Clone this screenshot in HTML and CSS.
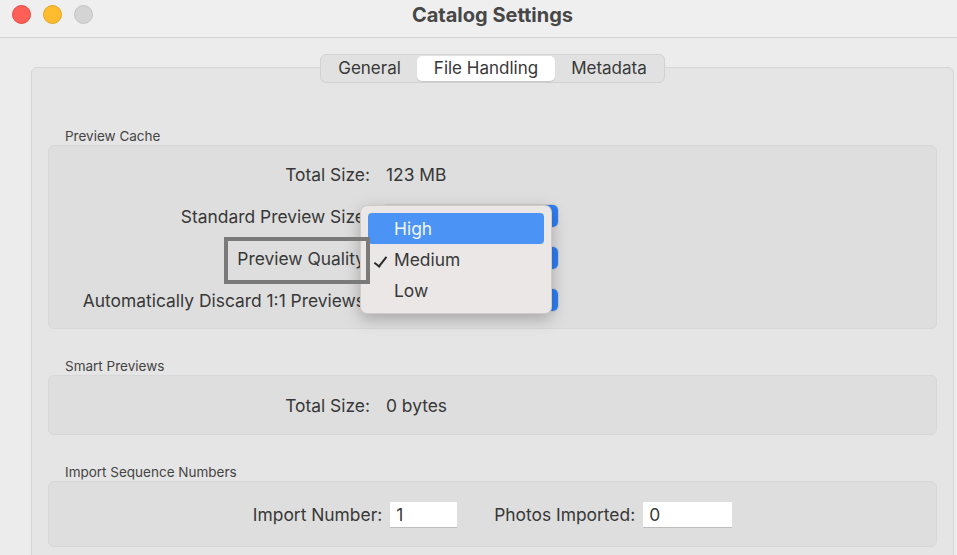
FILE: index.html
```html
<!DOCTYPE html>
<html lang="en">
<head>
<meta charset="utf-8"/>
<title>Catalog Settings</title>
<link rel="stylesheet" href="styles.css">
</head>
<body>
<div class="window">
    <header class="titlebar">
        <div class="lights">
            <span class="light red"></span>
            <span class="light yellow"></span>
            <span class="light gray"></span>
        </div>
        <h1 class="title">Catalog Settings</h1>
        <div></div>
    </header><!-- titlebar -->

    <main class="tabview">
        <nav class="tabs">
            <span class="tab">General</span>
            <span class="tab on">File Handling</span>
            <span class="tab">Metadata</span>
        </nav>

        <section class="group">
            <div class="group_label">Preview Cache</div>
            <div class="box box_cache">
                <div class="row"><span class="lbl">Total Size:</span><span class="val">123 MB</span></div>
                <div class="row"><span class="lbl">Standard Preview Size:</span><span class="popup"></span></div>
                <div class="row"><span class="lbl">Preview Quality:</span><span class="popup"></span></div>
                <div class="row"><span class="lbl">Automatically Discard 1:1 Previews:</span><span class="popup"></span></div>

                <ul class="menu">
                    <li class="sel">High</li>
                    <li class="checked">Medium</li>
                    <li>Low</li>
                </ul>
                <div class="callout"></div>
            </div>
        </section><!-- group -->

        <section class="group">
            <div class="group_label">Smart Previews</div>
            <div class="box box_smart">
                <div class="row"><span class="lbl">Total Size:</span><span class="val">0 bytes</span></div>
            </div>
        </section><!-- group -->

        <section class="group">
            <div class="group_label">Import Sequence Numbers</div>
            <div class="box box_import">
                <label class="field">Import Number: <span class="input w_num">1</span></label>
                <label class="field">Photos Imported: <span class="input w_photo">0</span></label>
            </div>
        </section><!-- group -->
    </main><!-- tabview -->
</div>
</body>
</html>
```

FILE: styles.css
```css
*{margin:0;padding:0;box-sizing:border-box;}
li{list-style:none;}

html,body{height:100%;overflow:hidden;}
body{
    background:#ececec;
    font-family:Inter,"Liberation Sans",sans-serif;
    color:#383838;}

.window{width:985px;height:100%;}

/* title bar */
.titlebar{
    display:grid;
    grid-template-columns:1fr auto 1fr;
    align-items:center;
    height:38px;
    background:#efeff0;
    border-bottom:1px solid #d3d3d3;}

.lights{display:flex;gap:12px;padding:0 0 8px 12px;}
.light{width:19px;height:19px;border-radius:50%;}
.light.red{background:#fe5f57;border:1px solid #e8463f;}
.light.yellow{background:#febc2e;border:1px solid #e3a41e;}
.light.gray{background:#d4d4d4;border:1px solid #c4c4c4;}

.title{
    font-size:20px;font-weight:700;
    color:#474747;
    padding-bottom:8px;}

/* tab view */
.tabview{
    display:flex;flex-direction:column;
    margin:29px 31px 0;
    height:600px;
    padding:0 16px;
    background:#e5e5e5;
    border:1px solid #d6d6d6;
    border-radius:6px;}

.tabs{
    align-self:center;
    display:flex;
    margin:-14px 0 45px;
    padding:1px;
    background:#e1e1e1;
    border:1px solid #d2d2d2;
    border-radius:6px;}

.tab{
    font-size:17px;
    line-height:25px;
    padding:0 16px;
    border-radius:5px;}
.tab.on{background:#fff;box-shadow:0 1px 1px rgba(0,0,0,.12);padding:0 17px;}

.group{margin-bottom:29px;}
.group_label{
    font-size:13.5px;line-height:16px;
    color:#444;
    padding-left:17px;margin-bottom:1px;}

.box{
    position:relative;
    background:#dedede;
    border:1px solid #d7d7d7;
    border-radius:6px;}

.box_cache{padding:7px 0;}
.box_smart{padding:8px 0;}

.row{
    display:grid;
    grid-template-columns:321px 1fr;
    column-gap:16px;
    align-items:center;
    height:42px;
    font-size:17.4px;}
.lbl{text-align:right;}

.popup{
    position:relative;
    width:176px;height:22px;
    margin-left:-4px;
    background:#fff;
    border-radius:5px;
    box-shadow:0 0 0 1px rgba(0,0,0,.08);}
.popup::after{
    content:"";
    position:absolute;
    right:0;top:0;
    width:17px;height:100%;
    background:#2f7ef0;
    border-radius:0 5px 5px 0;}

/* open menu */
.menu{
    position:absolute;
    left:311px;top:59px;
    width:192px;
    padding:7px;
    background:#ebe7e7;
    border:1px solid rgba(0,0,0,.12);
    border-radius:7px;
    box-shadow:0 5px 16px rgba(0,0,0,.25);
    font-size:17.4px;
    z-index:5;}
.menu li{
    position:relative;
    height:31px;line-height:31px;
    padding-left:26px;
    border-radius:4px;}
.menu li.sel{background:#4b94f6;color:#f2f7ff;}
.menu li.checked::before{
    content:"";
    position:absolute;
    left:9px;top:10px;
    width:5px;height:11px;
    border:solid #2a2a2a;
    border-width:0 2px 2px 0;
    transform:rotate(38deg);}

.callout{
    position:absolute;
    left:175px;top:91px;
    width:146px;height:47px;
    border:4px solid #7a7a7a;
    z-index:6;}

/* import numbers */
.box_import{
    display:flex;
    justify-content:center;
    align-items:center;
    gap:37px;
    height:66px;
    font-size:17.4px;}
.field{display:flex;align-items:center;gap:8px;}
.input{
    height:25px;line-height:25px;
    padding-left:6px;
    background:#fff;
    box-shadow:0 1px 0 rgba(0,0,0,.15);}
.w_num{width:67px;}
.w_photo{width:89px;}
```
